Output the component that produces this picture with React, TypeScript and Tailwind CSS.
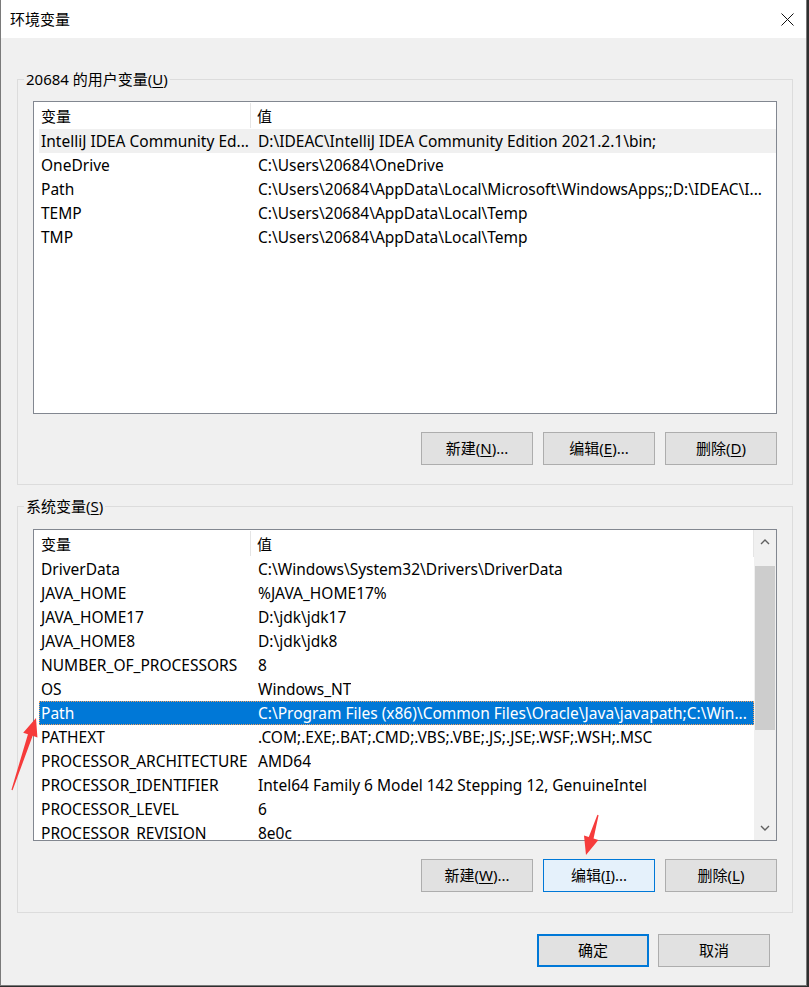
import React from 'react';

const FONT = { fontFamily: '"Noto Sans", "Noto Sans CJK SC", sans-serif' };

type Row = [string, string];

const userVars: Row[] = [
  ['IntelliJ IDEA Community Ed...', 'D:\\IDEAC\\IntelliJ IDEA Community Edition 2021.2.1\\bin;'],
  ['OneDrive', 'C:\\Users\\20684\\OneDrive'],
  ['Path', 'C:\\Users\\20684\\AppData\\Local\\Microsoft\\WindowsApps;;D:\\IDEAC\\I...'],
  ['TEMP', 'C:\\Users\\20684\\AppData\\Local\\Temp'],
  ['TMP', 'C:\\Users\\20684\\AppData\\Local\\Temp'],
];

const sysVars: Row[] = [
  ['DriverData', 'C:\\Windows\\System32\\Drivers\\DriverData'],
  ['JAVA_HOME', '%JAVA_HOME17%'],
  ['JAVA_HOME17', 'D:\\jdk\\jdk17'],
  ['JAVA_HOME8', 'D:\\jdk\\jdk8'],
  ['NUMBER_OF_PROCESSORS', '8'],
  ['OS', 'Windows_NT'],
  ['Path', 'C:\\Program Files (x86)\\Common Files\\Oracle\\Java\\javapath;C:\\Win...'],
  ['PATHEXT', '.COM;.EXE;.BAT;.CMD;.VBS;.VBE;.JS;.JSE;.WSF;.WSH;.MSC'],
  ['PROCESSOR_ARCHITECTURE', 'AMD64'],
  ['PROCESSOR_IDENTIFIER', 'Intel64 Family 6 Model 142 Stepping 12, GenuineIntel'],
  ['PROCESSOR_LEVEL', '6'],
  ['PROCESSOR_REVISION', '8e0c'],
];

// mnemonic label like 新建(N)...
function Label({ text, key_, tail = '' }: { text: string; key_: string; tail?: string }) {
  return (
    <span>
      {text}(<span className="underline underline-offset-2">{key_}</span>){tail}
    </span>
  );
}

function Btn({ children, focused = false }: { children: React.ReactNode; focused?: boolean }) {
  return (
    <button
      className={`w-[112px] h-[33px] text-[15px] text-black flex items-center justify-center border ${
        focused ? 'border-[#0078d7] bg-[#e5f1fb]' : 'border-[#adadad] bg-[#e1e1e1]'
      }`}
    >
      {children}
    </button>
  );
}

function ListHeader() {
  return (
    <div className="flex h-[27px] items-center bg-white">
      <div className="ml-[5px] w-[212px] h-[25px] pl-[2px] flex items-center border-r border-[#e5e5e5]">变量</div>
      <div className="pl-[6px] flex items-center">值</div>
    </div>
  );
}

function ListRow({ row, kind }: { row: Row; kind?: 'hover' | 'selected' }) {
  const cls =
    kind === 'selected'
      ? 'bg-[#0078d7] text-white border border-dotted border-[#f0a060]'
      : kind === 'hover'
      ? 'bg-[#f0f0f0] border border-transparent'
      : 'border border-transparent';
  return (
    <div className={`ml-[5px] flex h-[24px] pb-[1px] items-center whitespace-nowrap overflow-hidden text-[15.5px] ${cls}`}>
      <div className="w-[212px] pl-[1px] shrink-0 overflow-hidden">{row[0]}</div>
      <div className="pl-[6px] overflow-hidden">{row[1]}</div>
    </div>
  );
}

function Chevron({ up }: { up: boolean }) {
  return (
    <svg width="10" height="6" viewBox="0 0 10 6">
      <polyline
        points={up ? '1,5 5,1 9,5' : '1,1 5,5 9,1'}
        fill="none"
        stroke="#606060"
        strokeWidth="1.4"
      />
    </svg>
  );
}

// tapered red arrow from tail to tip
function Arrow({ tx, ty, px, py }: { tx: number; ty: number; px: number; py: number }) {
  const dx = px - tx;
  const dy = py - ty;
  const len = Math.hypot(dx, dy);
  const ux = dx / len;
  const uy = dy / len;
  const nx = -uy;
  const ny = ux;
  const headLen = 18;
  const headW = 7.5;
  const shaftW = 2.5;
  const bx = px - ux * headLen;
  const by = py - uy * headLen;
  const pts = [
    [tx - nx * 0.6, ty - ny * 0.6],
    [tx + nx * 0.6, ty + ny * 0.6],
    [bx + nx * shaftW, by + ny * shaftW],
    [bx + nx * headW, by + ny * headW],
    [px, py],
    [bx - nx * headW, by - ny * headW],
    [bx - nx * shaftW, by - ny * shaftW],
  ]
    .map((p) => p.join(','))
    .join(' ');
  return <polygon points={pts} fill="#f63b3b" />;
}

export default function App() {
  return (
    <div className="relative w-[809px] h-[987px] bg-[#2e2e2e] text-black text-[15px]" style={FONT}>
      <div className="w-[807px] h-[986px] bg-[#f0f0f0] border-l border-r border-b border-[#7a7a7a] flex flex-col">
        {/* title bar */}
        <div className="h-[38px] bg-white flex items-center justify-between pl-[9px] pr-[12px]">
          <span className="text-[15px]">环境变量</span>
          <svg width="13" height="13" viewBox="0 0 13 13">
            <line x1="0.5" y1="0.5" x2="12.5" y2="12.5" stroke="#111" strokeWidth="1" />
            <line x1="12.5" y1="0.5" x2="0.5" y2="12.5" stroke="#111" strokeWidth="1" />
          </svg>
        </div>

        {/* user vars */}
        <fieldset className="mt-[31px] ml-[16px] w-[776px] border border-[#dcdcdc] pt-[12px] pb-[19px] px-[15px]">
          <legend className="-ml-[9px] px-[2px] leading-[20px]">
            20684 的用户变量(<span className="underline underline-offset-2">U</span>)
          </legend>
          <div className="h-[313px] bg-white border border-[#828790] leading-[20px]">
            <ListHeader />
            {userVars.map((r, i) => (
              <ListRow key={r[0]} row={r} kind={i === 0 ? 'hover' : undefined} />
            ))}
          </div>
          <div className="mt-[18px] flex justify-end gap-[10px]">
            <Btn><Label text="新建" key_="N" tail="..." /></Btn>
            <Btn><Label text="编辑" key_="E" tail="..." /></Btn>
            <Btn><Label text="删除" key_="D" /></Btn>
          </div>
        </fieldset>

        {/* system vars */}
        <fieldset className="mt-[11px] ml-[16px] w-[776px] border border-[#dcdcdc] pt-[13px] pb-[20px] px-[15px]">
          <legend className="-ml-[9px] px-[2px] leading-[20px]">
            系统变量(<span className="underline underline-offset-2">S</span>)
          </legend>
          <div className="h-[312px] bg-white border border-[#828790] leading-[20px] flex overflow-hidden">
            <div className="flex-1 overflow-hidden">
              <div className="border-r border-[#e5e5e5]">
                <ListHeader />
              </div>
              {sysVars.map((r) => (
                <ListRow key={r[0]} row={r} kind={r[0] === 'Path' ? 'selected' : undefined} />
              ))}
            </div>
            <div className="w-[22px] bg-[#f0f0f0] flex flex-col shrink-0">
              <div className="h-[24px] flex items-center justify-center">
                <Chevron up />
              </div>
              <div className="flex-1 flex flex-col">
                <div className="h-[12px]" />
                <div className="h-[164px] mx-[1px] bg-[#cdcdcd]" />
              </div>
              <div className="h-[24px] flex items-center justify-center">
                <Chevron up={false} />
              </div>
            </div>
          </div>
          <div className="mt-[18px] flex justify-end gap-[10px]">
            <Btn><Label text="新建" key_="W" tail="..." /></Btn>
            <Btn focused><Label text="编辑" key_="I" tail="..." /></Btn>
            <Btn><Label text="删除" key_="L" /></Btn>
          </div>
        </fieldset>

        {/* dialog buttons */}
        <div className="mt-[21px] ml-[16px] w-[776px] pr-[23px] flex justify-end gap-[9px]">
          <button className="w-[112px] h-[33px] text-[15px] border-2 border-[#0078d7] bg-[#e1e1e1]">确定</button>
          <button className="w-[112px] h-[33px] text-[15px] border border-[#adadad] bg-[#e1e1e1]">取消</button>
        </div>
      </div>

      {/* annotation arrows */}
      <svg className="absolute left-0 top-0 pointer-events-none" width="809" height="987">
        <Arrow tx={12} ty={790} px={36} py={718} />
        <Arrow tx={598} ty={815} px={586} py={855} />
      </svg>
    </div>
  );
}
